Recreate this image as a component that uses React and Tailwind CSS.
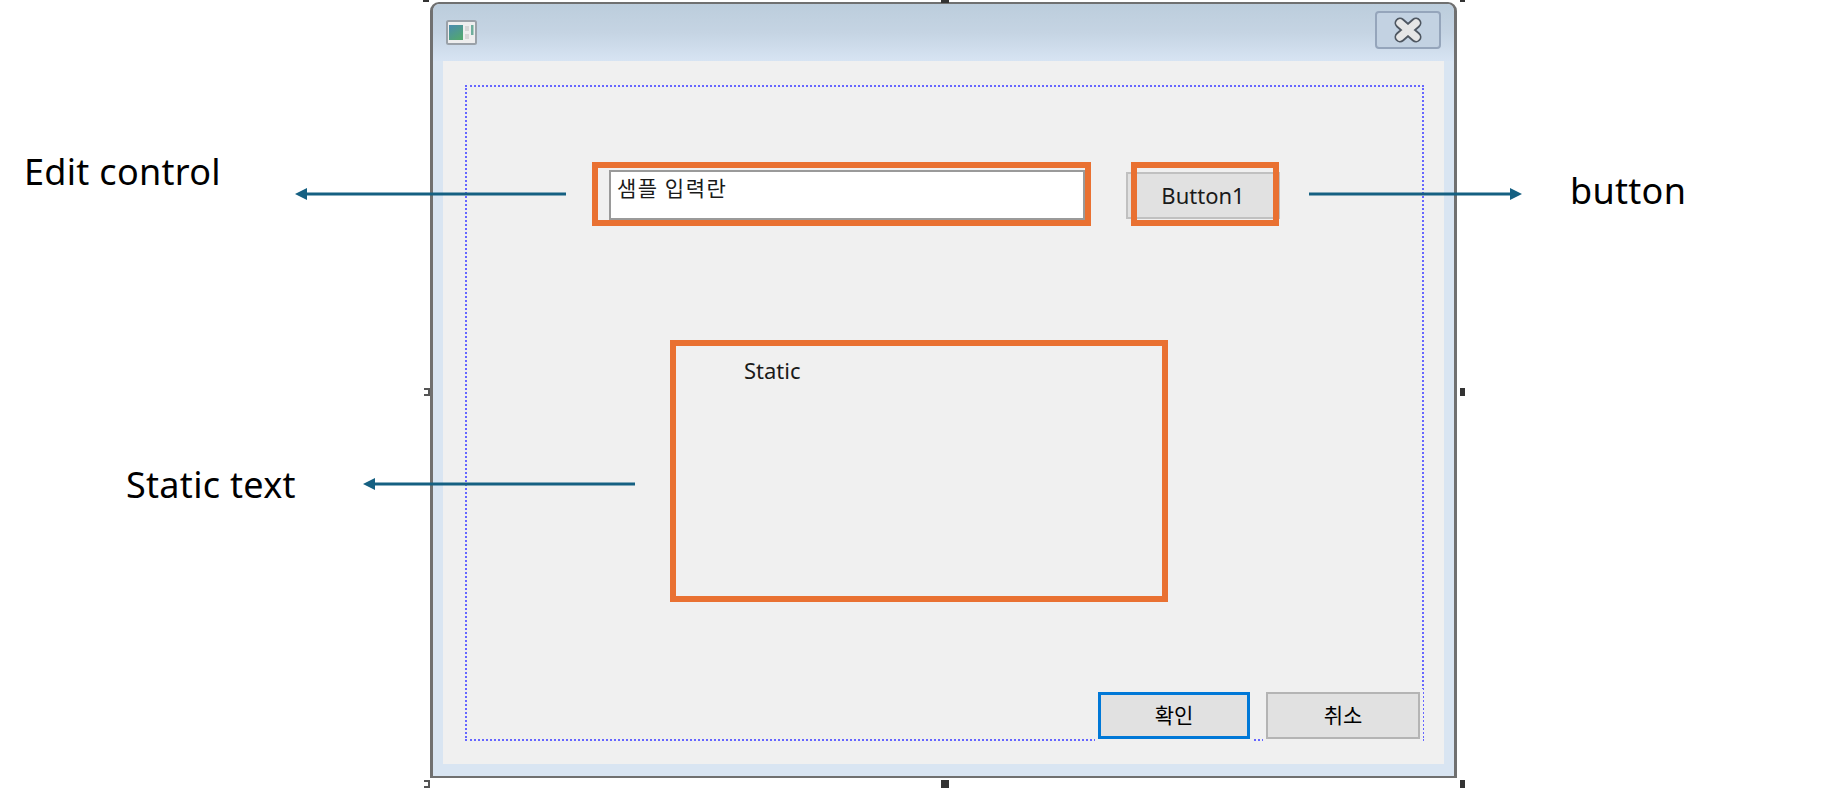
import React from 'react'

const FONT = "font-['Noto_Sans','Noto_Sans_CJK_KR',sans-serif]"
const KR = "font-['Noto_Sans_CJK_KR',sans-serif]"

const WindowIcon = () => (
  <svg width="31" height="25" viewBox="0 0 31 25">
    <defs>
      <linearGradient id="pane" x1="0" y1="0" x2="0.6" y2="1">
        <stop offset="0" stopColor="#4a8bb0" />
        <stop offset="1" stopColor="#52a672" />
      </linearGradient>
    </defs>
    <rect x="1" y="1" width="29" height="23" rx="1.5" fill="#eeeeee" stroke="#9aa1a8" strokeWidth="2" />
    <rect x="3" y="5" width="14" height="15" fill="url(#pane)" />
    <rect x="19" y="6" width="4" height="5" fill="#d6d6d6" />
    <rect x="19" y="14" width="4" height="5" fill="#d6d6d6" />
    <rect x="25" y="5" width="2.5" height="10" fill="#6fae9c" />
  </svg>
)

const CloseGlyph = () => (
  <svg width="30" height="26" viewBox="0 0 30 26">
    <path d="M7 6 L23 20 M23 6 L7 20" stroke="#4e5660" strokeWidth="11" strokeLinecap="round" fill="none" />
    <path d="M7 6 L23 20 M23 6 L7 20" stroke="#e6e6e6" strokeWidth="7.5" strokeLinecap="round" fill="none" />
  </svg>
)

const ArrowLeft = ({ width }) => (
  <svg className="shrink-0" width={width} height="14" viewBox={`0 0 ${width} 14`}>
    <path d={`M11 7 H${width}`} stroke="#156082" strokeWidth="3" />
    <path d="M0 7 L12 1 V13 Z" fill="#156082" />
  </svg>
)

const ArrowRight = ({ width }) => (
  <svg className="shrink-0" width={width} height="14" viewBox={`0 0 ${width} 14`}>
    <path d={`M0 7 H${width - 11}`} stroke="#156082" strokeWidth="3" />
    <path d={`M${width} 7 L${width - 12} 1 V13 Z`} fill="#156082" />
  </svg>
)

const Label = ({ className, text }) => (
  <div className={`text-[36px] leading-[48px] tracking-[0.3px] text-black ${className}`}>{text}</div>
)

const DialogButton = ({ className, label }) => (
  <button className={`h-[47px] bg-[#e1e1e1] outline-[3px] outline-[#f0f0f0] pb-[2px] text-[21px] text-black ${KR} ${className}`}>
    {label}
  </button>
)

export default function App() {
  return (
    <div className={`relative w-[1827px] h-[800px] overflow-hidden bg-white pl-[430px] pt-[2px] ${FONT}`}>
      <div className="flex flex-col w-[1027px] h-[776px] border-x-[3px] border-y-2 border-[#707070] rounded-t-[9px] bg-[#d9e5f2]">
        <div className="flex items-center justify-between h-[57px] shrink-0 px-[13px] rounded-t-[7px] bg-gradient-to-b from-[#bccddc] via-[#c5d4e3] to-[#d7e4f3]">
          <WindowIcon />
          <div className="flex items-center justify-center w-[66px] h-[38px] mt-[-6px] border-2 border-[#95a5bb] rounded-[4px] bg-[#c3d2e2]">
            <CloseGlyph />
          </div>
        </div>
        <div className="flex flex-1 mx-[10px] mb-[12px] pt-[24px] pl-[22px] pr-[20px] pb-[23px] bg-[#f0f0f0]">
          <div className="flex flex-col flex-1 border-2 border-dotted border-[#6666ff]">
            <div className="flex items-start mt-[75px] ml-[125px] gap-[35px]">
              <div className="flex w-[499px] h-[64px] border-[6px] border-[#e97132] pl-[11px] pt-[2px]">
                <div className={`flex-1 border-2 border-[#9a9a9a] bg-white pl-[6px] text-[21px] leading-[30px] tracking-[1.5px] text-[#1a1a1a] ${KR}`}>
                  샘플 입력란
                </div>
              </div>
              <div className="relative mt-[10px]">
                <button className="w-[154px] h-[47px] border-2 border-[#c0c0c0] bg-[#e1e1e1] pb-[2px] text-[22px] leading-[30px] text-[#1a1a1a]">
                  Button1
                </button>
                <div className="absolute left-[5px] top-[-10px] w-[148px] h-[64px] border-[6px] border-[#e97132]"></div>
              </div>
            </div>
            <div className="w-[498px] h-[262px] mt-[114px] ml-[203px] border-[6px] border-[#e97132] pl-[68px] pt-[9px] text-[22px] leading-[30px] text-[#1a1a1a]">
              Static
            </div>
            <div className="flex justify-end gap-[16px] mt-auto pr-[2px]">
              <DialogButton className="w-[152px] border-[3px] border-[#0078d7]" label="확인" />
              <DialogButton className="w-[154px] border-2 border-[#b4b4b4]" label="취소" />
            </div>
          </div>
        </div>
      </div>

      <div className="absolute left-[24px] top-[148px] flex">
        <Label className="w-[271px]" text="Edit control" />
        <div className="mt-[39px]"><ArrowLeft width={271} /></div>
      </div>
      <div className="absolute left-[126px] top-[461px] flex">
        <Label className="w-[237px]" text="Static text" />
        <div className="mt-[16px]"><ArrowLeft width={272} /></div>
      </div>
      <div className="absolute left-[1309px] top-[167px] flex gap-[48px]">
        <div className="mt-[20px]"><ArrowRight width={213} /></div>
        <Label text="button" />
      </div>

      {/* resize handles of the dialog editor */}
      <div className="absolute left-[423px] top-0 flex w-[1042px] justify-between">
        <div className="w-[6px] h-[2px] bg-[#333333]"></div>
        <div className="w-[8px] h-[3px] bg-[#333333]"></div>
        <div className="w-[5px] h-[2px] bg-[#333333]"></div>
      </div>
      <div className="absolute left-[424px] top-[388px] flex w-[1041px] justify-between">
        <div className="w-[6px] h-[8px] border-2 border-l-0 border-[#555555]"></div>
        <div className="w-[5px] h-[8px] bg-[#333333]"></div>
      </div>
      <div className="absolute left-[424px] top-[780px] flex w-[1041px] justify-between">
        <div className="w-[6px] h-[8px] border-2 border-l-0 border-[#555555]"></div>
        <div className="w-[8px] h-[8px] bg-[#333333]"></div>
        <div className="w-[5px] h-[8px] bg-[#333333]"></div>
      </div>
    </div>
  )
}
